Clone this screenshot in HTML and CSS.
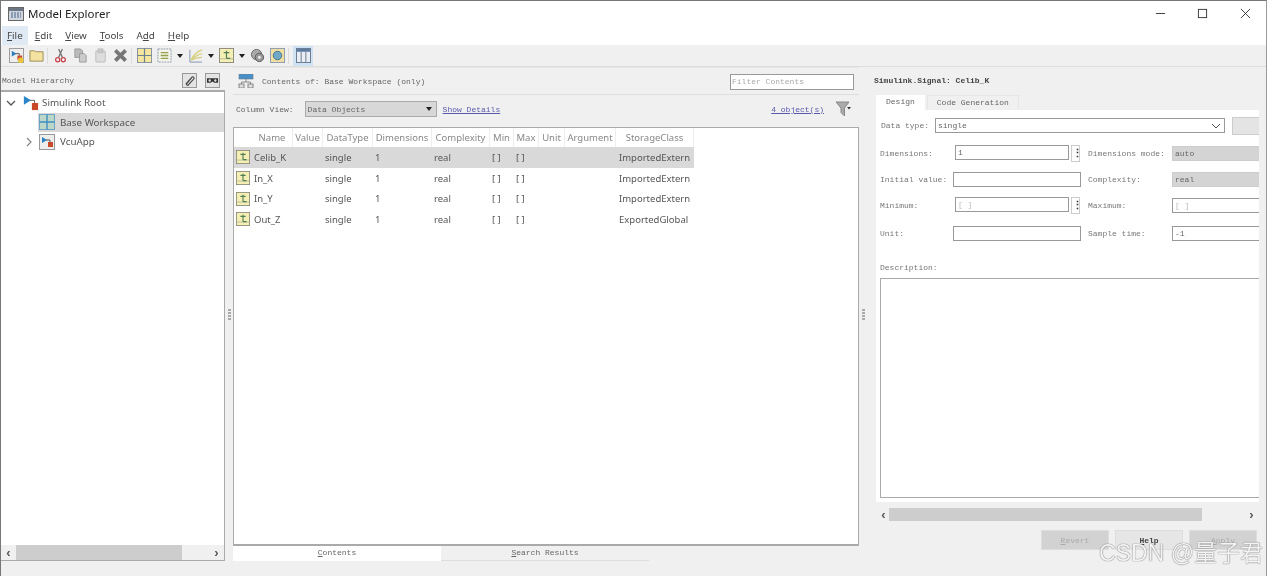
FILE: index.html
```html
<!DOCTYPE html>
<html lang="en">
<head>
<meta charset="utf-8">
<title>Model Explorer</title>
<link rel="stylesheet" href="styles.css">
</head>
<body>
<svg class="defs" width="0" height="0">
  <defs>
    <symbol id="i-block" viewBox="0 0 16 16"><rect x=".5" y=".5" width="15" height="15" fill="#eee" stroke="#999"/><path d="M3 3l5 3-5 3z" fill="#2a7fc0"/><rect x="9" y="8" width="5" height="5" fill="#c94a2a"/><path d="M7 6h4v2" fill="none" stroke="#555"/></symbol>
    <symbol id="i-root" viewBox="0 0 18 18"><path d="M1 1l8 5-8 5z" fill="#2a86c8"/><rect x="10" y="9" width="7" height="8" fill="#c9482a"/><path d="M8 6h5v3" fill="none" stroke="#555"/></symbol>
    <symbol id="i-var" viewBox="0 0 16 16"><rect x=".5" y=".5" width="15" height="15" fill="#f6efb4" stroke="#8b8b7a"/><path d="M1 11.5h14" stroke="#b9b9a0"/><path d="M8 3v8M5 5h6M8 11h4" fill="none" stroke="#4f7f52" stroke-width="1.3"/></symbol>
  </defs>
</svg>
<div class="window">
  <header class="titlebar">
    <svg class="app-icon" viewBox="0 0 16 14"><rect x=".5" y=".5" width="15" height="13" fill="#cfd6de" stroke="#666"/><rect x="1" y="1" width="14" height="3" fill="#6c7684"/><path d="M3 6h10M3 8h10M3 10h10" stroke="#47608a" stroke-dasharray="2 1"/></svg>
    <span class="app-title">Model Explorer</span>
    <div class="win-controls">
      <svg viewBox="0 0 12 12"><path d="M1 6h10" stroke="#333"/></svg>
      <svg viewBox="0 0 12 12"><rect x="1.5" y="1.5" width="9" height="9" fill="none" stroke="#333"/></svg>
      <svg viewBox="0 0 12 12"><path d="M1 1l10 10M11 1L1 11" stroke="#333"/></svg>
    </div>
  </header>

  <nav class="menubar">
    <span class="menu active"><u>F</u>ile</span>
    <span class="menu"><u>E</u>dit</span>
    <span class="menu"><u>V</u>iew</span>
    <span class="menu"><u>T</u>ools</span>
    <span class="menu">A<u>d</u>d</span>
    <span class="menu"><u>H</u>elp</span>
  </nav>

  <div class="toolbar">
    <span class="tb"><svg viewBox="0 0 16 16"><use href="#i-block"/><circle cx="12.5" cy="13" r="3" fill="#e8c53a"/></svg></span>
    <span class="tb"><svg viewBox="0 0 16 16"><path d="M1 3h5l1 1h8v10H1z" fill="#f4e3a0" stroke="#9a8a55"/></svg></span>
    <span class="tb-sep"></span>
    <span class="tb"><svg viewBox="0 0 16 16"><path d="M10 1L6 10M6 1l4 9" stroke="#777" stroke-width="1.4"/><circle cx="5" cy="12.5" r="2.2" fill="none" stroke="#c8404a" stroke-width="1.3"/><circle cx="11" cy="12.5" r="2.2" fill="none" stroke="#c8404a" stroke-width="1.3"/></svg></span>
    <span class="tb"><svg viewBox="0 0 16 16"><path d="M2 1h6l2 2v7H2z" fill="#bbb" stroke="#999"/><path d="M7 6h5l2 2v7H7z" fill="#ccc" stroke="#999"/></svg></span>
    <span class="tb"><svg viewBox="0 0 16 16"><rect x="3" y="3" width="10" height="12" rx="1" fill="#ddd" stroke="#bbb"/><rect x="5.5" y="1" width="5" height="4" fill="#ccc" stroke="#bbb"/></svg></span>
    <span class="tb"><svg viewBox="0 0 16 16"><path d="M2.5 2.5l11 11M13.5 2.5l-11 11" stroke="#777" stroke-width="4"/></svg></span>
    <span class="tb-sep"></span>
    <span class="tb"><svg viewBox="0 0 16 16"><rect x=".5" y=".5" width="15" height="15" fill="#f5e7a0" stroke="#8490a0"/><path d="M8 .5v15M.5 8h15" stroke="#6f8090" stroke-width="1.3"/></svg></span>
    <span class="tb"><svg viewBox="0 0 16 16"><rect x="1" y="1" width="14" height="14" fill="#f3f3ea" stroke="#8a9ab0" stroke-dasharray="2 1"/><path d="M4 5h8M4 8h8M4 11h8" stroke="#97a04e" stroke-width="1.4"/></svg></span>
    <span class="tb-arrow"></span>
    <span class="tb"><svg viewBox="0 0 16 16"><path d="M2 2v13h13" fill="none" stroke="#7d93ad"/><path d="M3 13C6 7 9 4 15 2M3 13C7 9 10 7 15 6M3 13c4-2 7-3 12-3" fill="none" stroke="#d6d080" stroke-width="1.4"/></svg></span>
    <span class="tb-arrow"></span>
    <span class="tb"><svg viewBox="0 0 16 16"><use href="#i-var"/></svg></span>
    <span class="tb-arrow"></span>
    <span class="tb"><svg viewBox="0 0 16 16"><circle cx="7" cy="7" r="5.5" fill="#aaa" stroke="#666"/><circle cx="10" cy="10" r="4.5" fill="#999" stroke="#555"/><circle cx="10" cy="10" r="1.5" fill="#eee"/></svg></span>
    <span class="tb"><svg viewBox="0 0 16 16"><rect x=".5" y=".5" width="15" height="15" fill="#f0dfa0" stroke="#8a9ab0"/><circle cx="8" cy="8" r="4.5" fill="#6fa9c8" stroke="#47708a"/></svg></span>
    <span class="tb-sep wide"></span>
    <span class="tb on"><svg viewBox="0 0 16 16"><rect x=".5" y=".5" width="15" height="15" fill="#e8eef4" stroke="#68788c"/><rect x="1" y="1" width="14" height="3" fill="#5b7ba0"/><path d="M5.5 4v11M10.5 4v11" stroke="#68788c"/></svg></span>
  </div>

  <main class="panes">
    <section class="pane-left">
      <div class="left-head">
        <span class="mono">Model Hierarchy</span>
        <div class="left-tools">
          <span class="small-btn"><svg viewBox="0 0 14 14"><path d="M3 11L10 3a2 2 0 0 1 2 2L6 11.5a1 1 0 0 1-2-1l5-6" fill="none" stroke="#444" stroke-width="1.2"/></svg></span>
          <span class="small-btn"><svg viewBox="0 0 14 14"><path d="M1 4.5h12v5H9L7 8 5 9.5H1z" fill="#333"/><circle cx="4" cy="7" r="1.3" fill="#ddd"/><circle cx="10" cy="7" r="1.3" fill="#ddd"/></svg></span>
        </div>
      </div>
      <div class="tree">
        <div class="tree-body">
          <div class="tree-row root">
            <svg class="chev" viewBox="0 0 10 10"><path d="M1 3l4 4 4-4" fill="none" stroke="#555" stroke-width="1.3"/></svg>
            <svg class="node root-icon" viewBox="0 0 18 18"><use href="#i-root"/></svg>
            <span>Simulink Root</span>
          </div>
          <div class="tree-row child selected">
            <svg class="node" viewBox="0 0 16 16"><rect x=".5" y=".5" width="15" height="15" fill="#bcd7c8" stroke="#6fa3c4"/><path d="M8 .5v15M.5 8h15" stroke="#3f8fc4" stroke-width="1.4"/></svg>
            <span>Base Workspace</span>
          </div>
          <div class="tree-row child expandable">
            <svg class="chev right" viewBox="0 0 10 10"><path d="M3 1l4 4-4 4" fill="none" stroke="#888" stroke-width="1.2"/></svg>
            <svg class="node" viewBox="0 0 16 16"><use href="#i-block"/></svg>
            <span>VcuApp</span>
          </div>
        </div>
        <div class="hscroll">
          <span class="sc-arrow">&#8249;</span>
          <span class="sc-thumb left-thumb"></span>
          <span class="sc-arrow end">&#8250;</span>
        </div>
      </div>
    </section>

    <div class="splitter"><i></i><i></i><i></i><i></i></div>

    <section class="pane-mid">
      <div class="contents-head">
        <svg class="contents-icon" viewBox="0 0 16 14"><rect x="1" y="0" width="14" height="5" fill="#4a90c8" stroke="#6a7a8a" stroke-width=".6"/><path d="M8 5v3M3.5 10V8h9v2" fill="none" stroke="#888"/><rect x="1" y="10" width="5" height="4" fill="#ddd" stroke="#888"/><rect x="10" y="10" width="5" height="4" fill="#ddd" stroke="#888"/></svg>
        <span class="mono">Contents of: Base Workspace (only)</span>
        <span class="filter mono">Filter Contents</span>
      </div>
      <div class="column-row">
        <span class="mono">Column View:</span>
        <span class="combo mono">Data Objects<i class="caret"></i></span>
        <a class="link mono">Show Details</a>
        <a class="link mono count">4 object(s)</a>
        <svg class="funnel" viewBox="0 0 16 16"><path d="M1 1h13L9.5 7v8L6 11.5V7z" fill="#aaa" stroke="#888"/><path d="M12 6h4l-2 2.5z" fill="#333"/></svg>
      </div>
      <div class="table-box">
        <div class="trow thead">
          <span></span><span>Name</span><span>Value</span><span>DataType</span><span>Dimensions</span><span>Complexity</span><span>Min</span><span>Max</span><span>Unit</span><span>Argument</span><span>StorageClass</span>
        </div>
        <div class="trow sel">
          <span class="ic"><svg viewBox="0 0 16 16"><use href="#i-var"/></svg></span><span class="n">Celib_K</span><span></span><span class="l">single</span><span class="l">1</span><span class="l">real</span><span class="l">[ ]</span><span class="l">[ ]</span><span></span><span></span><span class="l">ImportedExtern</span>
        </div>
        <div class="trow">
          <span class="ic"><svg viewBox="0 0 16 16"><use href="#i-var"/></svg></span><span class="n">In_X</span><span></span><span class="l">single</span><span class="l">1</span><span class="l">real</span><span class="l">[ ]</span><span class="l">[ ]</span><span></span><span></span><span class="l">ImportedExtern</span>
        </div>
        <div class="trow">
          <span class="ic"><svg viewBox="0 0 16 16"><use href="#i-var"/></svg></span><span class="n">In_Y</span><span></span><span class="l">single</span><span class="l">1</span><span class="l">real</span><span class="l">[ ]</span><span class="l">[ ]</span><span></span><span></span><span class="l">ImportedExtern</span>
        </div>
        <div class="trow">
          <span class="ic"><svg viewBox="0 0 16 16"><use href="#i-var"/></svg></span><span class="n">Out_Z</span><span></span><span class="l">single</span><span class="l">1</span><span class="l">real</span><span class="l">[ ]</span><span class="l">[ ]</span><span></span><span></span><span class="l">ExportedGlobal</span>
        </div>
      </div>
      <div class="bottom-tabs">
        <span class="btab on mono"><u>C</u>ontents</span>
        <span class="btab mono"><u>S</u>earch Results</span>
      </div>
    </section>

    <div class="splitter wide"><i></i><i></i><i></i><i></i></div>

    <section class="pane-right">
      <h2 class="signal-title mono">Simulink.Signal: Celib_K</h2>
      <div class="tabs">
        <span class="tab on mono">Design</span>
        <span class="tab mono">Code Generation</span>
      </div>
      <div class="tab-panel mono">
        <div class="type-row">
          <span class="lbl">Data type:</span>
          <span class="field type-field">single<svg class="down" viewBox="0 0 10 10"><path d="M1 3l4 4 4-4" fill="none" stroke="#555"/></svg></span>
          <span class="type-btn"></span>
        </div>
        <div class="form">
          <span class="lbl">Dimensions:</span>
          <div class="with-spin"><span class="field">1</span><span class="spin">&#8942;</span></div>
          <span class="lbl">Dimensions mode:</span>
          <span class="field off">auto</span>

          <span class="lbl">Initial value:</span>
          <span class="field short"></span>
          <span class="lbl">Complexity:</span>
          <span class="field off">real</span>

          <span class="lbl">Minimum:</span>
          <div class="with-spin"><span class="field dim">[ ]</span><span class="spin">&#8942;</span></div>
          <span class="lbl">Maximum:</span>
          <span class="field dim">[ ]</span>

          <span class="lbl">Unit:</span>
          <span class="field short"></span>
          <span class="lbl">Sample time:</span>
          <span class="field">-1</span>
        </div>
        <div class="desc-label lbl">Description:</div>
        <div class="desc"></div>
      </div>
      <div class="hscroll right-scroll">
        <span class="sc-arrow">&#8249;</span>
        <span class="sc-thumb right-thumb"></span>
        <span class="sc-arrow end">&#8250;</span>
      </div>
      <div class="actions mono">
        <span class="act off"><u>R</u>evert</span>
        <span class="act help"><u>H</u>elp</span>
        <span class="act off"><u>A</u>pply</span>
      </div>
    </section>
  </main>
  <div class="watermark">CSDN @量子君</div>
</div>
</body>
</html>
```
FILE: styles.css
```css
* { box-sizing: border-box; }
html, body { margin: 0; height: 100%; overflow: hidden; background: #f0f0f0; }
.defs { position: absolute; }
.mono { font-family: "Liberation Mono", "Noto Sans CJK SC", monospace; font-size: 8px; color: #666; }
.window {
  position: relative; width: 1267px; height: 576px;
  border-top: 1px solid #777; border-left: 1px solid #777; border-right: 1px solid #999;
  font-family: "Noto Sans", "Open Sans", sans-serif; color: #444; background: #f0f0f0;
  overflow: hidden; filter: blur(.35px);
}
.titlebar { height: 25px; background: #fff; display: flex; align-items: center; padding-left: 7px; }
.app-icon { width: 16px; height: 14px; margin-right: 4px; }
.app-title { font-size: 11.5px; color: #222; }
.win-controls { margin-left: auto; display: flex; }
.win-controls svg { width: 11px; height: 11px; margin-right: 32px; }
.win-controls svg:nth-child(1) { margin-right: 31px; }
.win-controls svg:last-child { margin-right: 15px; }
.menubar { height: 19px; background: #fff; display: flex; align-items: center; font-size: 9.8px; padding-left: 1px; }
.menu { padding: 0 5px; line-height: 19px; margin-right: 3px; color: #444; white-space: nowrap; }
.menu.active { background: #dfeaf5; margin-right: 2px; padding: 0 5px; }
.toolbar { height: 22px; background: #f0f0f0; display: flex; align-items: center; padding-left: 5px; border-bottom: 1px solid #ddd; }
.tb { width: 20px; height: 20px; display: flex; align-items: center; justify-content: center; }
.tb svg { width: 15px; height: 15px; }
.tb.on { background: #cfe3f5; }
.tb-sep { width: 4px; height: 18px; position: relative; }
.tb-sep::after { content: ""; position: absolute; left: 1px; top: 1px; bottom: 1px; width: 1px; background: #ddd; }
.tb-sep.wide { width: 6px; }
.tb-arrow { width: 10px; margin-left: 1px; height: 4px; display: flex; justify-content: center; }
.tb-arrow::before { content: ""; border: 3.5px solid transparent; border-top: 4px solid #222; border-bottom: 0; }

.panes { height: 494px; display: flex; align-items: stretch; }
.pane-left { width: 224px; display: flex; flex-direction: column; }
.left-head { height: 25px; display: flex; align-items: center; padding: 3px 0 0 1px; border-bottom: 2px solid #aaa; }
.left-tools { margin-left: auto; display: flex; gap: 8px; padding-right: 5px; }
.small-btn { width: 15px; height: 15px; border: 1px solid #999; background: #e4e4e4; display: flex; }
.small-btn svg { width: 13px; height: 13px; }
.tree { flex: 1; background: #fff; border-right: 1px solid #aaa; border-bottom: 1px solid #aaa; display: flex; flex-direction: column; }
.tree-body { flex: 1; padding-top: 1px; font-size: 9.8px; }
.tree-row { height: 19.5px; display: flex; align-items: center; color: #555; position: relative; }
.tree-row.root { padding-left: 5px; }
.tree-row.child { padding-left: 38px; }
.tree-row.selected { background: #d9d9d9; margin-left: 37px; padding-left: 1px; }
.chev { width: 10px; height: 10px; margin-right: 7px; }
.chev.right { position: absolute; left: 23px; top: 5px; }
.node { width: 16px; height: 16px; margin-right: 5px; }
.root-icon { margin-right: 3px; }
.hscroll { height: 15px; display: flex; align-items: center; background: #f0f0f0; flex-shrink: 0; }
.sc-arrow { width: 15px; text-align: center; font: bold 13px/13px "Liberation Sans", sans-serif; color: #555; }
.sc-arrow.end { margin-left: auto; }
.sc-thumb { height: 100%; background: #cdcdcd; display: block; }
.left-thumb { width: 166px; }

.splitter { width: 8px; display: flex; flex-direction: column; align-items: center; justify-content: center; gap: 1px; }
.splitter.wide { width: 14px; padding-right: 6px; }
.splitter i { width: 3px; height: 2px; background: #aaa; }

.pane-mid { width: 626px; display: flex; flex-direction: column; }
.contents-head { height: 28px; display: flex; align-items: center; padding-left: 5px; border-bottom: 1px solid #ddd; border-top: 1px solid #e6e6e6; }
.contents-icon { width: 16px; height: 14px; margin-right: 8px; }
.filter { margin: 2px 5px 0 auto; width: 124px; height: 16px; background: #fff; border: 1px solid #999; padding-left: 1px; line-height: 14px; color: #aaa; }
.column-row { height: 32px; display: flex; align-items: center; padding: 0 0 4px 3px; }
.combo { margin-left: 11px; width: 132px; height: 16px; background: #d8d8d8; border: 1px solid #aaa; padding-left: 2px; line-height: 15px; position: relative; }
.caret { position: absolute; right: 4px; top: 5px; border: 3.5px solid transparent; border-top: 4px solid #222; border-bottom: 0; }
.link { color: #5a5aae; text-decoration: underline; margin-left: 6px; }
.count { margin-left: auto; margin-right: 11px; }
.funnel { width: 16px; height: 16px; margin-right: 8px; }
.table-box { flex: 1; background: #fff; border: 1px solid #aaa; border-bottom-width: 2px; min-height: 0; }
.trow { display: grid; grid-template-columns: 18px 41px 30px 50px 59px 58px 24px 25px 26px 51px 78px; width: 460px; height: 20.7px; font-size: 9.5px; color: #555; align-items: center; }
.thead { height: 19px; color: #888; text-align: center; }
.thead span { border-right: 1px solid #eee; line-height: 19px; white-space: nowrap; }
.trow .l { padding-left: 2px; white-space: nowrap; }
.trow .l:last-child { padding-left: 3px; }
.trow .n { padding-left: 2px; white-space: nowrap; }
.trow .ic { display: flex; padding-left: 2px; }
.trow .ic svg { width: 14px; height: 14px; }
.trow.sel { background: #d9d9d9; }
.bottom-tabs { height: 15px; display: flex; flex-shrink: 0; }
.btab { width: 208px; text-align: center; line-height: 14px; border-bottom: 1px solid #ddd; }
.btab.on { background: #fff; border-bottom: 0; }

.pane-right { flex: 1; padding-left: 1px; display: flex; flex-direction: column; overflow: visible; min-width: 0; }
.signal-title { margin: 0; height: 28px; line-height: 27px; font-weight: bold; color: #444; }
.tabs { display: flex; height: 15px; padding-left: 2px; gap: 2px; }
.tab { height: 15px; line-height: 14px; padding: 0 9px; border: 1px solid #e6e6e6; border-bottom: 0; }
.tab.on { background: #fff; padding: 0 10px; border: 0; }
.tab-panel { margin-left: 2px; width: 383px; height: 392px; background: #fff; padding: 8px 0 0 4px; flex-shrink: 0; overflow: hidden; }
.field { height: 15px; border: 1px solid #999; background: #fff; display: block; line-height: 14px; padding-left: 2px; position: relative; min-width: 0; white-space: nowrap; overflow: hidden; }
.field.off { background: #d4d4d4; border-color: #ccc; color: #666; }
.field.dim { color: #bbb; }
.field.short { width: 128px; }
.lbl { white-space: nowrap; color: #777; }
.type-row { display: flex; align-items: center; height: 15px; }
.type-row .lbl { width: 55px; padding-left: 1px; flex-shrink: 0; }
.type-field { width: 290px; flex-shrink: 0; }
.down { position: absolute; right: 3px; top: 2px; width: 10px; height: 10px; }
.type-btn { width: 32px; height: 18px; background: #e4e4e4; border: 1px solid #ccc; margin-left: 7px; flex-shrink: 0; }
.form { display: grid; grid-template-columns: 73px 135px 84px 120px; grid-template-rows: 26px 26px 26px 30px; margin-top: 7px; align-items: center; }
.with-spin { display: flex; padding-left: 2px; }
.with-spin .field { width: 114px; }
.spin { width: 9px; height: 17px; margin-left: 2px; border: 1px solid #ccc; font: bold 11px/15px "Liberation Sans", sans-serif; text-align: center; color: #333; }
.desc-label { margin-top: 15px; height: 10px; line-height: 10px; }
.desc { height: 220px; margin-top: 5px; border: 1px solid #aaa; width: 400px; }
.right-scroll { margin-top: 6px; height: 13px; width: 383px; margin-left: 2px; flex-shrink: 0; }
.right-thumb { width: 313px; margin-left: -2px; }
.actions { display: flex; gap: 6px; margin-top: 9px; padding-left: 167px; flex-shrink: 0; }
.act { width: 68px; height: 20px; line-height: 19px; text-align: center; border: 1px solid #ddd; background: #e6e6e6; }
.act.off { background: #d2d2d2; color: #aaa; }
.act.help { color: #444; font-weight: bold; }
.watermark {
  position: absolute; right: 3px; bottom: 10px; font-family: "Liberation Sans", "Noto Sans CJK SC", sans-serif;
  font-size: 23px; line-height: 26px; color: #f3f3f3; text-shadow: 0 0 1px #777, 0 0 1px #777; white-space: nowrap;
}
```
